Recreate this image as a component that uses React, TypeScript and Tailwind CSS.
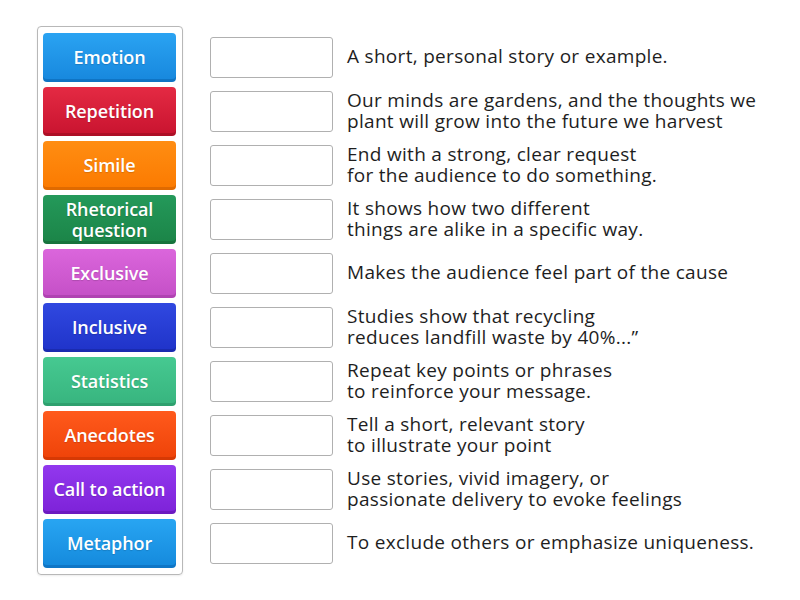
import React from "react";

type Item = { label: string; from: string; to: string; edge: string };

const items: Item[] = [
  { label: "Emotion", from: "bg-[#2aa3f2]", to: "to-[#1787dd]", edge: "shadow-[inset_0_-3px_0_#0f74c4]" },
  { label: "Repetition", from: "bg-[#e42a43]", to: "to-[#c8132f]", edge: "shadow-[inset_0_-3px_0_#ad0f26]" },
  { label: "Simile", from: "bg-[#ff8d12]", to: "to-[#fb7a00]", edge: "shadow-[inset_0_-3px_0_#e06a00]" },
  { label: "Rhetorical question", from: "bg-[#24995a]", to: "to-[#1b8447]", edge: "shadow-[inset_0_-3px_0_#17733d]" },
  { label: "Exclusive", from: "bg-[#db66dc]", to: "to-[#c44fc6]", edge: "shadow-[inset_0_-3px_0_#b042b2]" },
  { label: "Inclusive", from: "bg-[#3048e0]", to: "to-[#1f33c9]", edge: "shadow-[inset_0_-3px_0_#1a2bb0]" },
  { label: "Statistics", from: "bg-[#46c991]", to: "to-[#37b47e]", edge: "shadow-[inset_0_-3px_0_#2ea06e]" },
  { label: "Anecdotes", from: "bg-[#ff5a1c]", to: "to-[#ee4208]", edge: "shadow-[inset_0_-3px_0_#d63904]" },
  { label: "Call to action", from: "bg-[#9238ee]", to: "to-[#7d22d8]", edge: "shadow-[inset_0_-3px_0_#6c1ac0]" },
  { label: "Metaphor", from: "bg-[#28a5f2]", to: "to-[#1489dc]", edge: "shadow-[inset_0_-3px_0_#0f76c6]" },
];

const prompts: string[][] = [
  ["A short, personal story or example."],
  ["Our minds are gardens, and the thoughts we", "plant will grow into the future we harvest"],
  ["End with a strong, clear request", "for the audience to do something."],
  ["It shows how two different", "things are alike in a specific way."],
  ["Makes the audience feel part of the cause"],
  ["Studies show that recycling", "reduces landfill waste by 40%...\u201d"],
  ["Repeat key points or phrases", "to reinforce your message."],
  ["Tell a short, relevant story", "to illustrate your point"],
  ["Use stories, vivid imagery, or", "passionate delivery to evoke feelings"],
  ["To exclude others or emphasize uniqueness."],
];

export default function App() {
  return (
    <div className="w-[800px] h-[600px] bg-white font-['Open_Sans','Lato',sans-serif]">
      <div className="flex pl-[37px] pt-[26px]">
        {/* Draggable answers */}
        <div className="w-[146px] border border-[#b8b8b8] rounded-[4px] pl-[5px] pr-[6px] py-[6px] flex flex-col gap-[5px] shadow-[0_1px_2px_rgba(0,0,0,0.08)]">
          {items.map((it) => (
            <div
              key={it.label}
              className={`h-[49px] rounded-[4px] flex items-center justify-center text-center px-1 bg-gradient-to-b from-transparent ${it.from} ${it.to} ${it.edge}`}
            >
              <span className="text-white text-[18px] font-semibold leading-[21px] tracking-[-0.1px] [text-shadow:0_1px_1px_rgba(0,0,0,0.15)]">
                {it.label}
              </span>
            </div>
          ))}
        </div>

        {/* Drop targets */}
        <div className="ml-[27px] pt-[7px] flex flex-col gap-[5px]">
          {prompts.map((lines, i) => (
            <div key={i} className="h-[49px] flex items-center">
              <div className="w-[123px] h-[41px] border border-[#b0b0b0] rounded-[3px] bg-white" />
              <div className="ml-[14px] text-[19px] leading-[21px] tracking-[0.3px] text-[#1e1e1e] -mt-[2px]">
                {lines.map((l) => (
                  <div key={l}>{l}</div>
                ))}
              </div>
            </div>
          ))}
        </div>
      </div>
    </div>
  );
}
